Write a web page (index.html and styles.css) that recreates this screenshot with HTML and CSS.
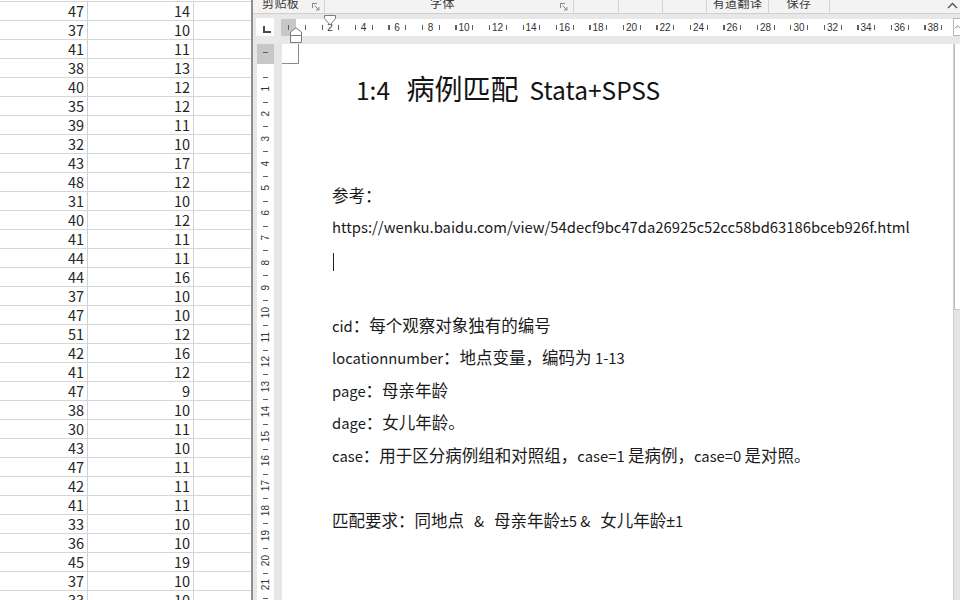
FILE: index.html
```html
<!DOCTYPE html>
<html lang="zh-CN">
<head>
<meta charset="utf-8">
<title>1:4 病例匹配 Stata+SPSS</title>
<link rel="stylesheet" href="styles.css">
</head>
<body>
<div class="app">
  <section class="sheet">
    <div class="row"><div class="cell">47</div><div class="cell">14</div><div class="cell"></div></div>
    <div class="row"><div class="cell">37</div><div class="cell">10</div><div class="cell"></div></div>
    <div class="row"><div class="cell">41</div><div class="cell">11</div><div class="cell"></div></div>
    <div class="row"><div class="cell">38</div><div class="cell">13</div><div class="cell"></div></div>
    <div class="row"><div class="cell">40</div><div class="cell">12</div><div class="cell"></div></div>
    <div class="row"><div class="cell">35</div><div class="cell">12</div><div class="cell"></div></div>
    <div class="row"><div class="cell">39</div><div class="cell">11</div><div class="cell"></div></div>
    <div class="row"><div class="cell">32</div><div class="cell">10</div><div class="cell"></div></div>
    <div class="row"><div class="cell">43</div><div class="cell">17</div><div class="cell"></div></div>
    <div class="row"><div class="cell">48</div><div class="cell">12</div><div class="cell"></div></div>
    <div class="row"><div class="cell">31</div><div class="cell">10</div><div class="cell"></div></div>
    <div class="row"><div class="cell">40</div><div class="cell">12</div><div class="cell"></div></div>
    <div class="row"><div class="cell">41</div><div class="cell">11</div><div class="cell"></div></div>
    <div class="row"><div class="cell">44</div><div class="cell">11</div><div class="cell"></div></div>
    <div class="row"><div class="cell">44</div><div class="cell">16</div><div class="cell"></div></div>
    <div class="row"><div class="cell">37</div><div class="cell">10</div><div class="cell"></div></div>
    <div class="row"><div class="cell">47</div><div class="cell">10</div><div class="cell"></div></div>
    <div class="row"><div class="cell">51</div><div class="cell">12</div><div class="cell"></div></div>
    <div class="row"><div class="cell">42</div><div class="cell">16</div><div class="cell"></div></div>
    <div class="row"><div class="cell">41</div><div class="cell">12</div><div class="cell"></div></div>
    <div class="row"><div class="cell">47</div><div class="cell">9</div><div class="cell"></div></div>
    <div class="row"><div class="cell">38</div><div class="cell">10</div><div class="cell"></div></div>
    <div class="row"><div class="cell">30</div><div class="cell">11</div><div class="cell"></div></div>
    <div class="row"><div class="cell">43</div><div class="cell">10</div><div class="cell"></div></div>
    <div class="row"><div class="cell">47</div><div class="cell">11</div><div class="cell"></div></div>
    <div class="row"><div class="cell">42</div><div class="cell">11</div><div class="cell"></div></div>
    <div class="row"><div class="cell">41</div><div class="cell">11</div><div class="cell"></div></div>
    <div class="row"><div class="cell">33</div><div class="cell">10</div><div class="cell"></div></div>
    <div class="row"><div class="cell">36</div><div class="cell">10</div><div class="cell"></div></div>
    <div class="row"><div class="cell">45</div><div class="cell">19</div><div class="cell"></div></div>
    <div class="row"><div class="cell">37</div><div class="cell">10</div><div class="cell"></div></div>
    <div class="row"><div class="cell">33</div><div class="cell">10</div><div class="cell"></div></div>
  </section>

  <section class="word">
    <div class="ribbon">
      <div class="grp g-clip"><span class="glabel">剪贴板</span>
        <svg class="launcher" width="8" height="8" viewBox="0 0 8 8"><path d="M0.5 5V0.5H5" fill="none" stroke="#8a8a8a"/><path d="M2.5 2.5L7 7M7 4v3H4" fill="none" stroke="#8a8a8a"/></svg>
      </div>
      <div class="grp g-font"><span class="glabel font-label">字体</span>
        <svg class="launcher" width="8" height="8" viewBox="0 0 8 8"><path d="M0.5 5V0.5H5" fill="none" stroke="#8a8a8a"/><path d="M2.5 2.5L7 7M7 4v3H4" fill="none" stroke="#8a8a8a"/></svg>
      </div>
      <div class="grp g-e1"></div>
      <div class="grp g-e2"></div>
      <div class="grp g-e3"></div>
      <div class="grp g-yd center"><span class="glabel">有道翻译</span></div>
      <div class="grp g-save center"><span class="glabel">保存</span></div>
      <svg class="collapse" width="11" height="7" viewBox="0 0 11 7"><path d="M1 6L5.5 1.5L10 6" fill="none" stroke="#555" stroke-width="1.4"/></svg>
    </div>

    <div class="rulerbar">
      <div class="tabcorner">
        <div class="tabsel">
          <svg width="18" height="18" viewBox="0 0 18 18"><path d="M7 8h2v5h6v2H7z" fill="#4a4a4a"/></svg>
        </div>
      </div>
      <div class="hruler">
        <div class="hnums">
          <span>2</span><span>4</span><span>6</span><span>8</span><span>10</span><span>12</span><span>14</span><span>16</span><span>18</span><span>20</span><span>22</span><span>24</span><span>26</span><span>28</span><span>30</span><span>32</span><span>34</span><span>36</span><span>38</span>
        </div>
        <svg class="mk-first" width="12" height="11" viewBox="0 0 12 11"><path d="M0.5 0.5H11.5V3.5L6 10L0.5 3.5Z" fill="#fff" stroke="#7a7a7a"/></svg>
        <svg class="mk-hang" width="14" height="17" viewBox="0 0 14 17"><path d="M1.5 8.5V5L7 0.8L12.5 5V8.5Z" fill="#fff" stroke="#7a7a7a"/><path d="M1.5 8.5H12.5V15.5H1.5Z" fill="#fff" stroke="#7a7a7a"/></svg>
      </div>
      <div class="scrollup">
        <svg width="7" height="6" viewBox="0 0 7 6"><path d="M1 4.5L4 1.5L7 4.5" fill="none" stroke="#777"/></svg>
      </div>
    </div>

    <div class="workspace">
      <div class="vgutter">
        <div class="vruler">
          <div class="vnums">
            <span><i>1</i></span><span><i>2</i></span><span><i>3</i></span><span><i>4</i></span><span><i>5</i></span><span><i>6</i></span><span><i>7</i></span><span><i>8</i></span><span><i>9</i></span><span><i>10</i></span><span><i>11</i></span><span><i>12</i></span><span><i>13</i></span><span><i>14</i></span><span><i>15</i></span><span><i>16</i></span><span><i>17</i></span><span><i>18</i></span><span><i>19</i></span><span><i>20</i></span><span><i>21</i></span>
          </div>
        </div>
      </div>

      <main class="page">
        <div class="crop"></div>
        <h1 class="title">1:4&nbsp;&nbsp;&nbsp;<span class="zh-t">病例匹配</span>&nbsp;&nbsp;Stata+SPSS</h1>
        <p class="ln"><span class="zh">参考：</span></p>
        <p class="ln">https://wenku.baidu.com/view/54decf9bc47da26925c52cc58bd63186bceb926f.html</p>
        <p class="ln"><span class="caret"></span></p>
        <p class="ln"></p>
        <p class="ln">cid<span class="zh">：每个观察对象独有的编号</span></p>
        <p class="ln">locationnumber<span class="zh">：地点变量，编码为</span> 1-13</p>
        <p class="ln">page<span class="zh">：母亲年龄</span></p>
        <p class="ln">dage<span class="zh">：女儿年龄。</span></p>
        <p class="ln">case<span class="zh">：用于区分病例组和对照组，</span>case=1 <span class="zh">是病例，</span>case=0 <span class="zh">是对照。</span></p>
        <p class="ln"></p>
        <p class="ln"><span class="zh">匹配要求：同地点</span>   &amp;   <span class="zh">母亲年龄</span><span class="sym">±</span>5 &amp;   <span class="zh">女儿年龄</span><span class="sym">±</span>1</p>
      </main>

      <div class="vscroll"><div class="thumb"></div></div>
    </div>
  </section>
</div>
</body>
</html>
```

FILE: styles.css
```css
* { box-sizing: border-box; margin: 0; padding: 0; }
html, body { width: 960px; height: 600px; overflow: hidden; background: #fff; }
body { font-family: "Noto Sans CJK SC", "Noto Sans", sans-serif; color: #1a1a1a; }

.app { display: flex; width: 960px; height: 600px; }

/* ---------- spreadsheet ---------- */
.sheet {
  width: 253px; flex: none; height: 600px; overflow: hidden;
  border-right: 2px solid #8e8e8e; padding-top: 1px; background: #fff;
}
.row {
  display: grid; grid-template-columns: 88px 106px 57px;
  height: 19px; border-top: 1px solid #d6d6d6;
}
.cell {
  border-right: 1px solid #cbd3db; text-align: right; padding-right: 3px;
  font-family: "Noto Sans CJK SC", "Noto Sans", sans-serif;
  font-size: 14.5px; line-height: 18px; color: #262626;
}
.cell:last-child { border-right: none; }

/* ---------- word ---------- */
.word { flex: 1; min-width: 0; display: flex; flex-direction: column; background: #e6e6e6; }

.ribbon {
  height: 14px; flex: none; display: flex; align-items: flex-start;
  background: #f3f3f3; border-bottom: 1px solid #cfcfcf; overflow: hidden;
}
.grp { height: 13px; display: flex; align-items: flex-start; border-right: 1px solid #d4d4d4; flex: none; }
.grp.center { justify-content: center; }
.g-clip { width: 72px; padding-left: 9px; }
.g-font { width: 249px; }
.g-e1 { width: 45px; }
.g-e2 { width: 44px; }
.g-e3 { width: 44px; }
.g-yd { width: 62px; }
.g-save { width: 61px; }
.glabel {
  font-size: 12px; line-height: 13px; margin-top: -4px; color: #3a3a3a;
  letter-spacing: 0.4px; white-space: nowrap;
}
.font-label { margin-left: 105px; }
.launcher { margin-left: auto; margin-right: 4px; margin-top: 3px; }
.g-font .launcher { margin-right: 5px; }
.collapse { margin-left: auto; margin-right: 2px; margin-top: 2px; }

.rulerbar { height: 30px; flex: none; display: flex; padding-top: 5px; background: #e8e8e8; }
.tabcorner { width: 28px; flex: none; padding-left: 3px; }
.tabsel { width: 18px; height: 18px; margin-top: -1px; background: #fff; }
.tabsel svg { display: block; }

.hruler {
  flex: 1; height: 17px; position: relative;
  background:
    repeating-linear-gradient(to right, #5e5e5e 0 1px, transparent 1px 16.75px) 7px 6px / 100% 5px no-repeat,
    linear-gradient(to right, #c7c7c7 0 15.5px, #fff 15.5px);
}
.hnums { display: flex; padding-left: 32.25px; height: 17px; }
.hnums span {
  width: 33.5px; flex: none; text-align: center;
  font: 10px/17px "Liberation Sans", Arial, sans-serif; color: #333;
}
.mk-first { position: absolute; left: 43px; top: -4px; }
.mk-hang { position: absolute; left: 8px; top: 8px; }

.scrollup {
  width: 7px; flex: none; height: 18px; margin-top: -1px;
  background: #fff; border: 1px solid #b8b8b8; border-right: none;
  display: flex; align-items: center; justify-content: center;
}

.workspace { flex: 1; min-height: 0; display: flex; }
.vgutter { width: 29px; flex: none; padding-left: 4px; }
.vruler {
  width: 17px; height: 100%;
  background:
    repeating-linear-gradient(to bottom, #5e5e5e 0 1px, transparent 1px 24.8px) 6px 7.8px / 5px 100% no-repeat,
    linear-gradient(to bottom, #c7c7c7 0 20.5px, #fff 20.5px);
}
.vnums { padding-top: 32.6px; }
.vnums span { display: flex; height: 24.8px; align-items: center; justify-content: center; }
.vnums i {
  font-style: normal; writing-mode: vertical-rl; transform: rotate(180deg);
  font: 10px "Liberation Sans", Arial, sans-serif; color: #333;
}

.page {
  flex: 1; min-width: 0; background: #fff; position: relative; overflow: hidden;
  padding: 24px 0 0 50px;
}
.crop {
  position: absolute; left: 0; top: 0; width: 17px; height: 20px;
  border-right: 1px solid #8a8a8a; border-bottom: 1px solid #8a8a8a;
}
.title {
  font-weight: normal; font-size: 24.5px; line-height: 40px; padding-left: 24px;
  margin-bottom: 68.75px; color: #141414; white-space: pre;
}
.zh-t { font-size: 28px; }
.ln {
  font-size: 14.8px; line-height: 32.5px; height: 32.5px; color: #1a1a1a;
  white-space: pre;
}
.zh { font-size: 16.5px; }
.sym { font-family: "Liberation Sans", "Noto Sans", sans-serif; font-size: 16px; }
.caret {
  display: inline-block; width: 1px; height: 18px; margin-left: 1px;
  background: #222; vertical-align: middle;
}

.vscroll { width: 7px; flex: none; background: #e4e4e4; border-left: 1px solid #cfcfcf; }
.thumb { height: 266px; background: #fff; border-left: 1px solid #bdbdbd; border-bottom: 1px solid #c8c8c8; }
```
